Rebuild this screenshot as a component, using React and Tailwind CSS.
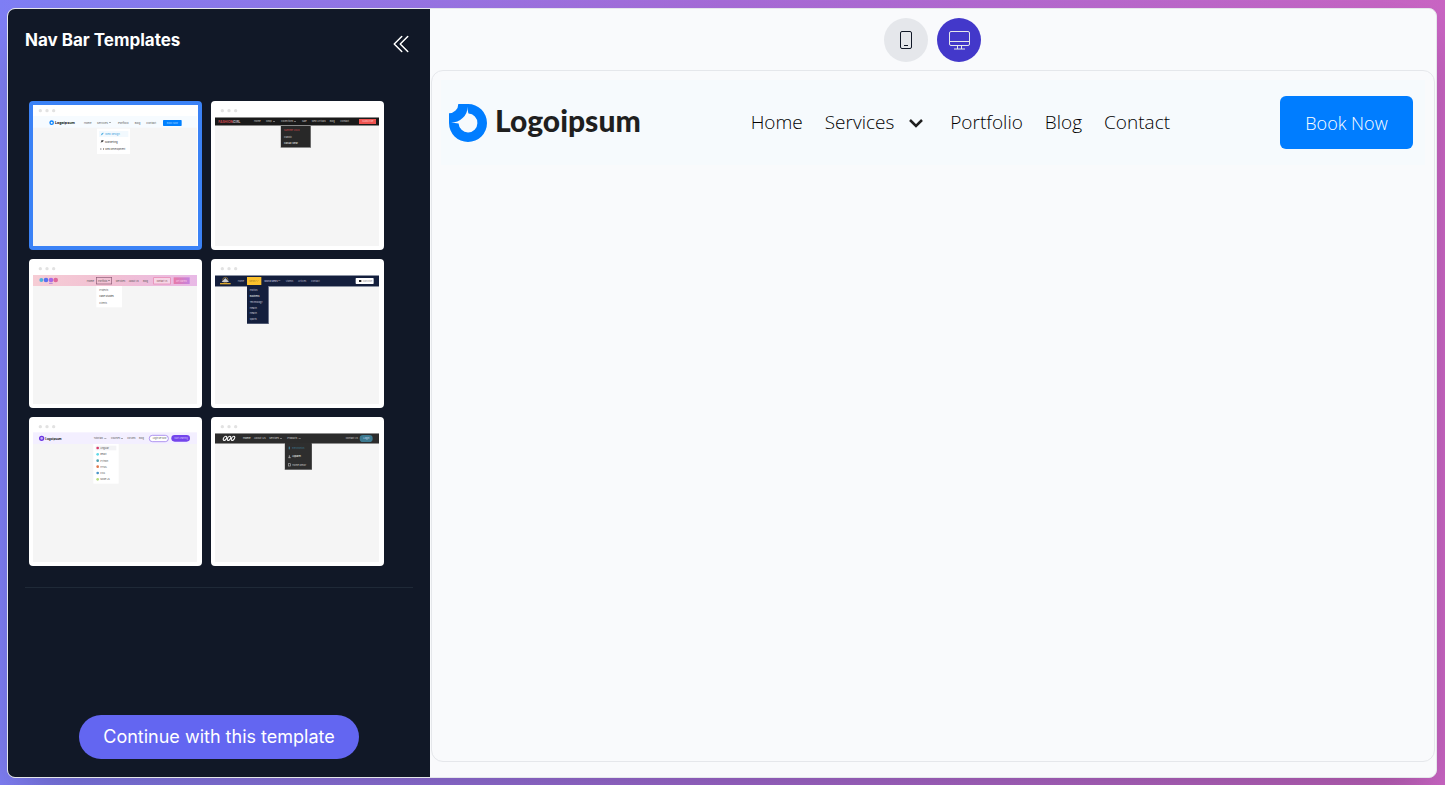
import React, { useState } from "react";
import { HiOutlineChevronDoubleLeft } from "react-icons/hi2";

// Tiny label inside a thumbnail
function T({ x, y, fill = "#555", size = 8, bold, children }) {
    return (
        <text x={x} y={y} fill={fill} fontSize={size} fontWeight={bold ? 700 : 400} fontFamily="Inter, sans-serif">
            {children}
        </text>
    );
}

function Arrow({ x, y, stroke = "#555" }) {
    return <path d={`M${x} ${y}l3 3 3-3`} fill="none" stroke={stroke} strokeWidth="1.4" />;
}

// Browser window shared by all the thumbnails
function Thumb({ children }) {
    return (
        <svg viewBox="0 0 492 423" className="block w-[164px]" aria-hidden="true">
            <rect width="492" height="423" fill="#fff" />
            <circle cx="22" cy="17" r="5" fill="#e2e2e2" />
            <circle cx="42" cy="17" r="5" fill="#e2e2e2" />
            <circle cx="62" cy="17" r="5" fill="#e2e2e2" />
            <rect y="36" width="492" height="387" fill="#f5f5f5" />
            {children}
        </svg>
    );
}

function ThumbServices() {
    return (
        <Thumb>
            <rect y="33" width="492" height="35" fill="#f6fbff" />
            <circle cx="56" cy="53" r="5" fill="none" stroke="#0a84ff" strokeWidth="4" />
            <T x={66} y={57} size={11} fill="#111" bold>Logoipsum</T>
            <T x={153} y={56}>Home</T>
            <T x={192} y={56}>Services</T>
            <Arrow x={228} y={51} />
            <T x={255} y={56}>Portfolio</T>
            <T x={305} y={56}>Blog</T>
            <T x={340} y={56}>Contact</T>
            <rect x="390" y="45" width="56" height="18" rx="2" fill="#0080ff" />
            <T x={401} y={57} fill="#9fd0ff" size={7}>Book Now</T>
            <rect x="192" y="71" width="99" height="76" fill="#fff" />
            <rect x="198" y="78" width="88" height="18" fill="#f2f9fe" />
            <path d="M203 91l4-7 5-1-2 5-5 3z" fill="#5ab4e4" />
            <T x={216} y={90} fill="#3ba3dc">Web design</T>
            <path d="M203 114l2-8 7-1-2 6-5 1z" fill="#555" />
            <T x={216} y={113} fill="#333">Marketing</T>
            <path d="M205 129l-3 3 3 3M210 129l3 3-3 3" fill="none" stroke="#444" strokeWidth="1.5" />
            <T x={216} y={135} size={7} fill="#444">Web Development</T>
        </Thumb>
    );
}

function ThumbFashion() {
    return (
        <Thumb>
            <rect y="36" width="492" height="27" fill="#8a8a8a" />
            <rect y="39" width="492" height="21" fill="#1a1a1a" />
            <T x={10} y={53} size={10} fill="#c94a50" bold>FASHION</T>
            <T x={54} y={53} size={10} fill="#bbb" bold>GIRL</T>
            <T x={117} y={52} size={7} fill="#ccc">Home</T>
            <T x={153} y={52} size={7} fill="#ccc">Shop</T>
            <Arrow x={174} y={48} stroke="#ccc" />
            <T x={198} y={52} size={7} fill="#ccc">Collections</T>
            <Arrow x={237} y={48} stroke="#ccc" />
            <T x={261} y={52} size={7} fill="#ccc">Sale</T>
            <T x={290} y={52} size={7} fill="#ccc">New Arrivals</T>
            <T x={344} y={52} size={7} fill="#ccc">Blog</T>
            <T x={376} y={52} size={7} fill="#ccc">Contact</T>
            <rect x="432" y="42" width="51" height="15" fill="#ef5350" />
            <T x={442} y={52} size={7} fill="#ffc4c4">Subscribe</T>
            <rect x="197" y="60" width="91" height="69" fill="#8a8a8a" />
            <rect x="198" y="63" width="88" height="63" fill="#282828" />
            <T x={207} y={79} size={7} fill="#d84b4e">Summer 2024</T>
            <T x={207} y={98} size={7} fill="#ccc">Classic</T>
            <T x={207} y={118} size={7} fill="#eee">Casual Wear</T>
        </Thumb>
    );
}

function ThumbPink() {
    return (
        <Thumb>
            <defs>
                <linearGradient id="pinkBar">
                    <stop offset="0" stopColor="#f6cdd5" />
                    <stop offset="0.5" stopColor="#f1bfd3" />
                    <stop offset="1" stopColor="#e8b9e6" />
                </linearGradient>
                <linearGradient id="pinkButton">
                    <stop offset="0" stopColor="#e87aa6" />
                    <stop offset="1" stopColor="#c583e0" />
                </linearGradient>
            </defs>
            <rect y="36" width="492" height="33" fill="url(#pinkBar)" />
            <circle cx="25" cy="51" r="6" fill="#4fb3dc" />
            <circle cx="39" cy="51" r="7" fill="#5a70f0" />
            <circle cx="54" cy="51" r="7" fill="#a868e6" />
            <circle cx="68" cy="51" r="7" fill="#e0689a" />
            <path d="M48 61h11" stroke="#b583d6" strokeWidth="3" />
            <T x={161} y={56}>Home</T>
            <rect x="190" y="43" width="46" height="20" fill="none" stroke="#8b5a74" strokeWidth="2" />
            <T x={195} y={56} size={7}>Portfolio</T>
            <Arrow x={225} y={51} />
            <T x={248} y={56} size={7}>Services</T>
            <T x={287} y={56} size={7}>About Us</T>
            <T x={330} y={56} size={7}>Blog</T>
            <rect x="362" y="44" width="50" height="19" fill="#f6d5e6" stroke="#e882ad" strokeWidth="2" />
            <T x={371} y={56} size={6} fill="#744">Contact Us</T>
            <rect x="422" y="43" width="48" height="20" fill="url(#pinkButton)" />
            <T x={429} y={56} size={6} fill="#fbd0e8">Get Started</T>
            <rect x="190" y="69" width="77" height="64" fill="#fff" />
            <T x={199} y={84} size={7}>Projects</T>
            <T x={199} y={103} size={7} fill="#333">Case Studies</T>
            <T x={199} y={122} size={7}>Clients</T>
        </Thumb>
    );
}

function ThumbNavy() {
    return (
        <Thumb>
            <rect y="36" width="492" height="36" fill="#8b92a2" />
            <rect y="39" width="492" height="30" fill="#141f3d" />
            <circle cx="31" cy="51" r="8" fill="none" stroke="#b08a35" strokeWidth="2" />
            <path d="M20 57l11-12 11 12z" fill="#c9cbd0" />
            <path d="M15 62h32" stroke="#d9a52c" strokeWidth="4" />
            <T x={68} y={56} size={7} fill="#bbc">Home</T>
            <rect x="96" y="42" width="43" height="24" fill="#fbc12d" />
            <T x={103} y={56} size={7} fill="#a67c1d">News</T>
            <Arrow x={124} y={52} stroke="#a67c1d" />
            <T x={148} y={56} size={7} fill="#dde">World News</T>
            <Arrow x={190} y={51} stroke="#bbc" />
            <T x={212} y={56} size={7} fill="#bbc">Videos</T>
            <T x={249} y={56} size={7} fill="#bbc">Articles</T>
            <T x={288} y={56} size={7} fill="#bbc">Contact</T>
            <rect x="422" y="45" width="54" height="18" rx="2" fill="#fff" />
            <rect x="432" y="51" width="7" height="6" fill="#222" />
            <T x={443} y={57} size={6} fill="#888">Subscribe</T>
            <rect x="96" y="69" width="66" height="114" fill="#6c748a" />
            <rect x="96" y="69" width="63" height="112" fill="#141f3d" />
            <T x={104} y={84} size={7} fill="#ccd">Politics</T>
            <T x={104} y={102} size={7} fill="#fff">Business</T>
            <T x={104} y={120} size={7} fill="#ccd">Technology</T>
            <T x={104} y={137} size={7} fill="#ccd">Health</T>
            <T x={104} y={154} size={7} fill="#ccd">Health</T>
            <T x={104} y={172} size={7} fill="#ccd">Sports</T>
        </Thumb>
    );
}

const courses = [
    { label: "Angular", y: 81, color: "#d83a6a" },
    { label: "React", y: 100, color: "#5fd8e8" },
    { label: "Python", y: 119, color: "#4d9fb0" },
    { label: "HTML", y: 137, color: "#e0764a" },
    { label: "CSS", y: 156, color: "#4a94c8" },
    { label: "Node JS", y: 175, color: "#b5dc7c" },
];

function ThumbPurple() {
    return (
        <Thumb>
            <rect y="34" width="492" height="35" fill="#f3efff" />
            <circle cx="26" cy="52" r="6" fill="#c4b0f5" stroke="#6a35e0" strokeWidth="4" />
            <T x={37} y={56} size={9} fill="#111" bold>Logoipsum</T>
            <T x={182} y={55} size={7}>Tutorials</T>
            <Arrow x={214} y={51} />
            <T x={234} y={55} size={7}>Courses</T>
            <Arrow x={264} y={51} />
            <T x={283} y={55} size={7}>Forums</T>
            <T x={318} y={55} size={7}>Blog</T>
            <rect x="349" y="43" width="57" height="19" rx="9" fill="#fff" stroke="#8a63e8" strokeWidth="2" />
            <T x={359} y={55} size={6}>Login Me Now</T>
            <rect x="415" y="42" width="56" height="20" rx="10" fill="#7445ec" />
            <T x={424} y={55} size={6} fill="#d6c6ff">Start Learning</T>
            <rect x="181" y="69" width="76" height="119" fill="#fff" />
            <rect x="188" y="74" width="62" height="14" fill="#f3f3f5" />
            {courses.map((course) => (
                <g key={course.label}>
                    <circle cx="194" cy={course.y} r="4" fill={course.color} />
                    <T x={202} y={course.y + 3} size={7}>{course.label}</T>
                </g>
            ))}
        </Thumb>
    );
}

function ThumbDark() {
    return (
        <Thumb>
            <rect y="36" width="492" height="33" fill="#8d8d8d" />
            <rect y="39" width="492" height="27" fill="#2c2c2c" />
            <g fill="none" stroke="#fff" strokeWidth="3">
                <ellipse cx="30" cy="52" rx="4" ry="7" transform="rotate(35 30 52)" />
                <ellipse cx="42" cy="52" rx="4" ry="7" transform="rotate(35 42 52)" />
                <ellipse cx="54" cy="52" rx="4" ry="7" transform="rotate(35 54 52)" />
            </g>
            <T x={84} y={55} fill="#eee">Home</T>
            <T x={117} y={55} fill="#ccc">About Us</T>
            <T x={163} y={55} size={7} fill="#ddd">Services</T>
            <Arrow x={195} y={51} stroke="#ccc" />
            <T x={217} y={55} size={7} fill="#ddd">Products</T>
            <Arrow x={251} y={51} stroke="#ccc" />
            <T x={392} y={55} size={7} fill="#ccc">Contact Us</T>
            <rect x="434" y="42" width="39" height="21" rx="10" fill="#3d7a90" />
            <T x={445} y={55} size={7} fill="#cde">Login</T>
            <rect x="209" y="66" width="82" height="81" fill="#8d8d8d" />
            <rect x="210" y="66" width="80" height="79" fill="#2e2e2e" />
            <rect x="221" y="77" width="4" height="8" fill="#3d7a90" />
            <T x={232} y={84} size={7} fill="#3d7a90">Electronics</T>
            <path d="M220 110h7M223 103v6" stroke="#ddd" strokeWidth="2" />
            <T x={232} y={109} size={7} fill="#fff">Apparel</T>
            <rect x="220" y="128" width="6" height="7" fill="none" stroke="#aaa" strokeWidth="2" />
            <T x={232} y={134} size={7} fill="#ccc">Home Decor</T>
        </Thumb>
    );
}

const templates = [
    { name: "Services", Preview: ThumbServices },
    { name: "Fashion", Preview: ThumbFashion },
    { name: "Portfolio", Preview: ThumbPink },
    { name: "News", Preview: ThumbNavy },
    { name: "Courses", Preview: ThumbPurple },
    { name: "Store", Preview: ThumbDark },
];

function Sidebar() {
    const [selected, setSelected] = useState(0);

    return (
        <aside className="flex w-[422px] shrink-0 flex-col bg-[#111827] px-[17px] pt-[17px] pb-[18px] font-[Inter,sans-serif] text-white">
            <div className="flex items-start justify-between">
                <h2 className="text-[17px] leading-7 font-bold">Nav Bar Templates</h2>
                <button type="button" aria-label="Collapse" className="pt-1.5">
                    <HiOutlineChevronDoubleLeft className="size-6" />
                </button>
            </div>

            <div className="mt-[45px] grid grid-cols-[173px_173px] gap-[9px] px-1">
                {templates.map(({ name, Preview }, index) => (
                    <button
                        key={name}
                        type="button"
                        aria-label={name}
                        aria-pressed={selected === index}
                        onClick={() => setSelected(index)}
                        className={`rounded border-4 bg-white ${selected === index ? "border-[#3b82f6]" : "border-white"}`}
                    >
                        <Preview />
                    </button>
                ))}
            </div>

            <hr className="mt-[21px] border-[#1f2937]" />

            <button type="button" className="mt-auto h-11 w-[280px] self-center rounded-full bg-[#6366f1] text-lg">
                Continue with this template
            </button>
        </aside>
    );
}

function PhoneIcon() {
    return (
        <svg viewBox="0 0 12 18" className="h-[18px] w-3" fill="none" stroke="currentColor" aria-hidden="true">
            <rect x="0.5" y="0.5" width="11" height="17" rx="1.5" />
            <path d="M4 14.500h4" />
        </svg>
    );
}

function DesktopIcon() {
    return (
        <svg viewBox="0 0 21 19" className="h-[19px] w-[21px]" fill="none" stroke="currentColor" aria-hidden="true">
            <rect x="0.5" y="0.5" width="20" height="14" rx="1.5" />
            <path d="M1 10.500h19M8.500 15v3M12.500 15v3M5 18h11" />
        </svg>
    );
}

function Logo() {
    return (
        <a href="#" className="flex items-center gap-2">
            <svg viewBox="0 0 38 38" className="size-[38px]" aria-hidden="true">
                <path
                    fill="#007dff"
                    fillRule="evenodd"
                    d="M9.300 0H19a19 19 0 1 1-19 19V9.300A9.300 9.300 0 0 0 9.300 0zM18.700 2.700Q18.800 8 19.500 9.600A9.400 9.400 0 1 1 9.600 19.500Q6 18.800 2 18.700A16.500 16.500 0 0 0 18.700 2.700z"
                />
            </svg>
            <span className="pb-1.5 font-[Lato,sans-serif] text-3xl font-black text-[#1f1f1f]">Logoipsum</span>
        </a>
    );
}

function PreviewNav() {
    return (
        <nav className="flex items-center justify-between bg-[#f6fafd] py-4 pr-3 pl-2 font-['Open_Sans',sans-serif] text-[19px] font-light text-[#1f1f1f]">
            <Logo />
            <div className="flex items-center gap-[22px] text-black">
                <a href="#">Home</a>
                <button type="button" className="flex items-center gap-2.5">
                    Services
                    <svg viewBox="0 0 24 24" className="size-6" fill="none" stroke="#1f1f1f" strokeWidth="2.5" aria-hidden="true">
                        <path d="M6 9l6 6 6-6" />
                    </svg>
                </button>
                <a href="#">Portfolio</a>
                <a href="#">Blog</a>
                <a href="#">Contact</a>
            </div>
            <button type="button" className="h-[53px] w-[133px] rounded-md bg-[#007dff] text-lg text-white">
                Book Now
            </button>
        </nav>
    );
}

function App() {
    return (
        <div className="h-screen bg-linear-to-r from-[#7f7ff5] via-[#a66cd8] to-[#c965c3] pt-2 pr-2 pb-[7px] pl-[7px]">
            <div className="flex h-full overflow-hidden rounded-lg border border-[#e5e7eb] bg-[#f9fafc] shadow-2xl">
                <Sidebar />
                <main className="flex min-w-0 flex-1 flex-col px-px pt-[9px] pb-[15px]">
                    <div className="flex justify-center gap-[9px] pr-px">
                        <button type="button" aria-label="Mobile" className="flex size-11 items-center justify-center rounded-full bg-[#e5e7eb] text-[#111827]">
                            <PhoneIcon />
                        </button>
                        <button type="button" aria-label="Desktop" className="flex size-11 items-center justify-center rounded-full bg-[#4338ca] text-[#e5e7eb]">
                            <DesktopIcon />
                        </button>
                    </div>
                    <div className="mt-2 flex-1 rounded-xl border border-[#e5e7eb] p-[9px]">
                        <PreviewNav />
                    </div>
                </main>
            </div>
        </div>
    );
}

export default App;
